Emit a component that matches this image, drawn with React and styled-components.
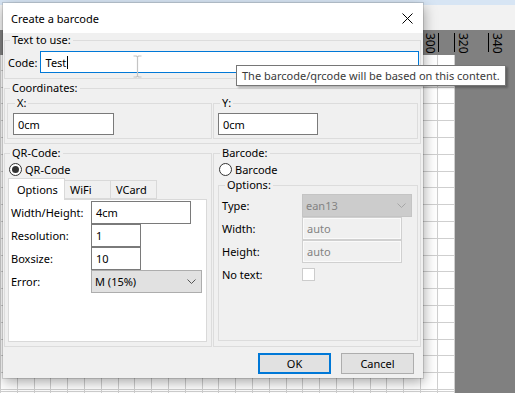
import React from 'react';
import styled, { createGlobalStyle } from 'styled-components';

const FONT = `"Noto Sans", "DejaVu Sans", sans-serif`;

const GlobalStyle = createGlobalStyle`
  html, body { margin: 0; padding: 0; }
  body {
    width: 515px;
    height: 393px;
    overflow: hidden;
    font-family: ${FONT};
    font-size: 11px;
    color: #000;
  }
  * { box-sizing: border-box; }
`;

// ---- the application behind the dialog ----

const Screen = styled.div`
  position: relative;
  width: 515px;
  height: 393px;
  overflow: hidden;
  display: flex;
  flex-direction: column;
  background: #f2f2f2;
`;

const AppStrip = styled.div`
  height: 5px;
  flex-shrink: 0;
  background: #d7e5f4;
`;

const Toolbar = styled.div`
  height: 25px;
  flex-shrink: 0;
  background: #f2f2f2;
`;

const Ruler = styled.div`
  height: 25px;
  flex-shrink: 0;
  background: #808080;
  svg { display: block; }
`;

const Workspace = styled.div`
  flex: 1;
  display: flex;
`;

const Page = styled.div`
  width: 455px;
  background-color: #fff;
  background-image:
    repeating-linear-gradient(to right, #cfcfcf 0 1px, transparent 1px 16.8px),
    repeating-linear-gradient(to bottom, #cfcfcf 0 1px, transparent 1px 16.8px);
  background-position: 0 -2px;
`;

const Gutter = styled.div`
  flex: 1;
  background: #808080;
`;

// ---- dialog ----

const Dialog = styled.div`
  position: absolute;
  left: 3px;
  top: 3px;
  width: 420px;
  height: 375px;
  display: flex;
  flex-direction: column;
  background: #f0f0f0;
  box-shadow: 0 0 0 1px rgba(0, 0, 0, 0.12), 1px 4px 12px rgba(0, 0, 0, 0.35);
`;

const TitleBar = styled.div`
  height: 30px;
  flex-shrink: 0;
  display: flex;
  align-items: center;
  justify-content: space-between;
  padding: 0 10px 0 8px;
  background: #fff;
  svg { display: block; }
`;

const Body = styled.div`
  flex: 1;
  display: flex;
  flex-direction: column;
  gap: 2px;
  padding: 0 2px 0 1px;
`;

const Group = styled.fieldset`
  margin: 0;
  min-width: 0;
  height: ${p => p.$h}px;
  padding: ${p => p.$pad || '0'};
  border: 1px solid #dcdcdc;
`;

// the legend sits inside the fieldset's left padding, so $ml is what is left of the offset
const Legend = styled.legend`
  height: 14px;
  margin-left: ${p => p.$ml ?? 2}px;
  padding: 0 2px;
  line-height: 14px;
`;

const Row = styled.div`
  display: flex;
  align-items: center;
  gap: ${p => p.$gap || 0}px;
  height: ${p => (p.$h ? `${p.$h}px` : 'auto')};
`;

const Split = styled.div`
  display: grid;
  grid-template-columns: 1fr 1fr;
  gap: 1px;
`;

const Columns = styled(Split)`
  height: 201px;
`;

const Field = styled.div`
  flex: ${p => (p.$w ? 'none' : '1')};
  width: ${p => (p.$w ? `${p.$w}px` : 'auto')};
  height: ${p => p.$h || 22}px;
  display: flex;
  align-items: center;
  padding-left: 4px;
  border: 1px solid ${p => (p.$focus ? '#0078d7' : p.$disabled ? '#d0d0d0' : '#7a7a7a')};
  background: ${p => (p.$disabled ? '#f0f0f0' : '#fff')};
  box-shadow: ${p => (p.$disabled ? 'inset 0 0 0 1px #fafafa' : 'none')};
  color: ${p => (p.$disabled ? '#838383' : '#000')};
  white-space: nowrap;
`;

const Caret = styled.span`
  width: 1px;
  height: 13px;
  margin-left: 1px;
  background: #000;
`;

const Select = styled.div`
  width: ${p => p.$w}px;
  height: 23px;
  display: flex;
  align-items: center;
  justify-content: space-between;
  padding: 0 5px 0 3px;
  border: 1px solid ${p => (p.$disabled ? '#c4c4c4' : '#adadad')};
  background: ${p => (p.$disabled ? '#cccccc' : '#e1e1e1')};
  color: ${p => (p.$disabled ? '#838383' : '#000')};
  svg { display: block; }
`;

const Radio = styled.span`
  width: 13px;
  height: 13px;
  flex-shrink: 0;
  margin-left: 1px;
  display: inline-flex;
  align-items: center;
  justify-content: center;
  border: 1px solid #333;
  border-radius: 50%;
  background: #fff;
  &::after {
    content: '';
    width: 7px;
    height: 7px;
    border-radius: 50%;
    background: ${p => (p.$checked ? '#333' : 'transparent')};
  }
`;

const Checkbox = styled.span`
  width: 13px;
  height: 13px;
  border: 1px solid #cccccc;
  background: #fff;
`;

const TabBar = styled.div`
  height: 21px;
  display: flex;
  align-items: flex-end;
`;

const Tab = styled.div`
  position: relative;
  z-index: ${p => (p.$active ? 1 : 0)};
  width: ${p => p.$w}px;
  height: ${p => (p.$active ? 22 : 19)}px;
  margin-bottom: ${p => (p.$active ? -1 : 0)}px;
  margin-left: ${p => (p.$first ? 0 : -1)}px;
  display: flex;
  align-items: center;
  padding-left: ${p => (p.$active ? 8 : 5)}px;
  padding-bottom: ${p => (p.$active ? 1 : 0)}px;
  border: 1px solid #d9d9d9;
  border-bottom: ${p => (p.$active ? 'none' : '1px solid #d9d9d9')};
  background: ${p => (p.$active ? '#fff' : '#f0f0f0')};
`;

const TabPanel = styled.div`
  height: 143px;
  border: 1px solid #d9d9d9;
  background: #fff;
`;

const FormGrid = styled.div`
  display: grid;
  grid-template-columns: 80px auto;
  grid-auto-rows: 23px;
  align-items: center;
  justify-items: start;
  padding: ${p => p.$pad};
`;

const Footer = styled.div`
  display: flex;
  justify-content: flex-end;
  gap: 10px;
  padding: 4px 7px 0 0;
`;

const Button = styled.div`
  width: 73px;
  height: 21px;
  display: flex;
  align-items: center;
  justify-content: center;
  border: ${p => (p.$default ? '2px solid #0078d7' : '1px solid #adadad')};
  background: #e1e1e1;
`;

const Tooltip = styled.div`
  position: absolute;
  left: 236px;
  top: 65px;
  height: 21px;
  padding: 0 5px;
  display: flex;
  align-items: center;
  border: 1px solid #767676;
  background: #fff;
  color: #3a3a3a;
  white-space: nowrap;
  box-shadow: 2px 2px 2px rgba(0, 0, 0, 0.25);
`;

const Pointer = styled.svg`
  position: absolute;
  left: 132px;
  top: 55px;
`;

const Chevron = ({ color = '#555' }) => (
  <svg width="9" height="5" viewBox="0 0 9 5">
    <polyline points="0.5,0.5 4.5,4.5 8.5,0.5" fill="none" stroke={color} strokeWidth="1" />
  </svg>
);

const RulerMarks = () => (
  <svg width="515" height="25" viewBox="0 0 515 25">
    {[438, 454, 488].map(x => (
      <line key={x} x1={x + 0.5} y1="3" x2={x + 0.5} y2="22" stroke="#000" strokeWidth="1" />
    ))}
    {[[426, '300'], [459, '320'], [493, '340']].map(([x, t]) => (
      <text key={t} transform={`translate(${x},3) rotate(90)`} fontFamily={FONT} fontSize="12" fill="#000">
        {t}
      </text>
    ))}
  </svg>
);

export default function App() {
  return (
    <Screen>
      <GlobalStyle />
      <AppStrip />
      <Toolbar />
      <Ruler>
        <RulerMarks />
      </Ruler>
      <Workspace>
        <Page />
        <Gutter />
      </Workspace>

      <Dialog>
        <TitleBar>
          <span>Create a barcode</span>
          <svg width="11" height="11" viewBox="0 0 11 11">
            <path d="M0.5 0.5 L10.5 10.5 M10.5 0.5 L0.5 10.5" stroke="#000" strokeWidth="1" />
          </svg>
        </TitleBar>

        <Body>
          <Group $h={46} $pad="4px 1px 5px 3px">
            <Legend $ml={2}>Text to use:</Legend>
            <Row $gap={2}>
              <span>Code:</span>
              <Field $focus>
                <span style={{ paddingLeft: 1 }}>Test</span>
                <Caret />
              </Field>
            </Row>
          </Group>

          <Group $h={63} $pad="1px 2px 4px 2px">
            <Legend $ml={3}>Coordinates:</Legend>
            <Split>
              <Group $h={43} $pad="3px 0 3px 5px">
                <Legend $ml={2}>X:</Legend>
                <Field $w={101}>0cm</Field>
              </Group>
              <Group $h={43} $pad="3px 0 3px 4px">
                <Legend $ml={2}>Y:</Legend>
                <Field $w={100}>0cm</Field>
              </Group>
            </Split>
          </Group>

          <Columns>
            <Group $h={201} $pad="1px 4px 4px 3px">
              <Legend $ml={2}>QR-Code:</Legend>
              <Row $h={17} $gap={3}>
                <Radio $checked />
                <span>QR-Code</span>
              </Row>
              <TabBar>
                <Tab $active $first $w={57}>Options</Tab>
                <Tab $w={47}>WiFi</Tab>
                <Tab $w={47}>VCard</Tab>
              </TabBar>
              <TabPanel>
                <FormGrid $pad="1px 0 0 2px">
                  <span>Width/Height:</span>
                  <Field $w={100} $h={23}>4cm</Field>
                  <span>Resolution:</span>
                  <Field $w={50} $h={23}>1</Field>
                  <span>Boxsize:</span>
                  <Field $w={50} $h={23}>10</Field>
                  <span>Error:</span>
                  <Select $w={111}>
                    <span>M (15%)</span>
                    <Chevron />
                  </Select>
                </FormGrid>
              </TabPanel>
            </Group>

            <Group $h={201} $pad="1px 2px 5px 4px">
              <Legend $ml={2}>Barcode:</Legend>
              <Row $h={17} $gap={3}>
                <Radio />
                <span>Barcode</span>
              </Row>
              <Group $h={163} $pad="2px 0 0 3px">
                <Legend $ml={3}>Options:</Legend>
                <FormGrid $pad="0">
                  <span>Type:</span>
                  <Select $w={110} $disabled>
                    <span>ean13</span>
                    <Chevron color="#a6a6a6" />
                  </Select>
                  <span>Width:</span>
                  <Field $w={100} $h={23} $disabled>auto</Field>
                  <span>Height:</span>
                  <Field $w={100} $h={23} $disabled>auto</Field>
                  <span>No text:</span>
                  <Checkbox />
                </FormGrid>
              </Group>
            </Group>
          </Columns>

          <Footer>
            <Button $default>OK</Button>
            <Button>Cancel</Button>
          </Footer>
        </Body>
      </Dialog>

      <Pointer width="11" height="23" viewBox="0 0 11 23">
        <path
          d="M1.5 1 H4.5 L5.5 2 L6.5 1 H9.5 M5.5 2 V21 M1.5 22 H4.5 L5.5 21 L6.5 22 H9.5"
          fill="none"
          stroke="#c4c4c4"
          strokeWidth="1.2"
        />
      </Pointer>

      <Tooltip>The barcode/qrcode will be based on this content.</Tooltip>
    </Screen>
  );
}
